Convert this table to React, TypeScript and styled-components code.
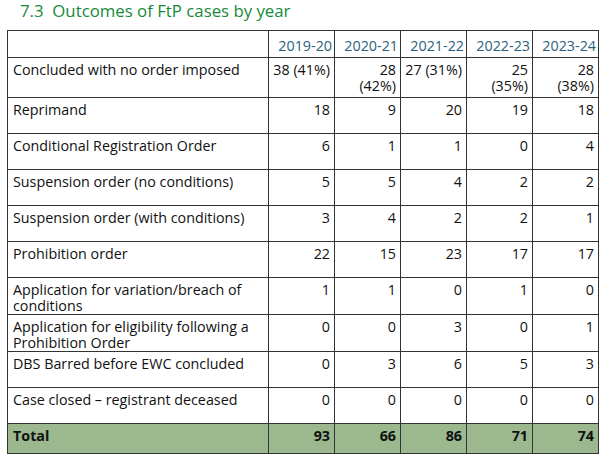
import styled, { createGlobalStyle } from 'styled-components';

const GlobalStyle = createGlobalStyle`
  body {
    margin: 0;
    background: #ffffff;
    font-family: 'Open Sans', 'Liberation Sans', sans-serif;
  }
`;

const Page = styled.div`
  padding: 0 0 0 7px;
  width: 606px;
  box-sizing: border-box;
`;

const Title = styled.h2`
  margin: 0;
  padding: 0 0 0 13px;
  height: 30px;
  line-height: 22px;
  font-size: 16.8px;
  font-weight: 400;
  color: #168a38;
`;

const Table = styled.table`
  border-collapse: collapse;
  table-layout: fixed;
  width: 591px;
  font-size: 14.3px;
  color: #111;
  border: 1.5px solid #333;
`;

const HeadCell = styled.th`
  border: 1px solid #333;
  height: 24px;
  padding: 2px 2px 0;
  font-weight: 400;
  color: #2c5f7e;
  text-align: right;
  vertical-align: middle;
  white-space: nowrap;
  font-size: 14.3px;
`;

const Row = styled.tr<{ $total?: boolean; $tall?: boolean }>`
  height: ${(p) => (p.$tall ? '40px' : p.$total ? '30px' : '36px')};
  background: ${(p) => (p.$total ? '#9bb88e' : 'transparent')};
  font-weight: ${(p) => (p.$total ? 700 : 400)};
`;

const LabelCell = styled.td`
  border: 1px solid #333;
  padding: 4px 5px 0;
  vertical-align: top;
  line-height: 16px;
`;

const NumCell = styled.td`
  border: 1px solid #333;
  padding: 4px 4px 0;
  vertical-align: top;
  text-align: right;
  line-height: 16px;
`;

const years = ['2019-20', '2020-21', '2021-22', '2022-23', '2023-24'];

const rows: { label: string; values: string[] }[] = [
  { label: 'Reprimand', values: ['18', '9', '20', '19', '18'] },
  { label: 'Conditional Registration Order', values: ['6', '1', '1', '0', '4'] },
  { label: 'Suspension order (no conditions)', values: ['5', '5', '4', '2', '2'] },
  { label: 'Suspension order (with conditions)', values: ['3', '4', '2', '2', '1'] },
  { label: 'Prohibition order', values: ['22', '15', '23', '17', '17'] },
  { label: 'Application for variation/breach of conditions', values: ['1', '1', '0', '1', '0'] },
  { label: 'Application for eligibility following a Prohibition Order', values: ['0', '0', '3', '0', '1'] },
  { label: 'DBS Barred before EWC concluded', values: ['0', '3', '6', '5', '3'] },
  { label: 'Case closed – registrant deceased', values: ['0', '0', '0', '0', '0'] },
];

const totals = ['93', '66', '86', '71', '74'];

const App = (): JSX.Element => {
  return (
    <>
      <GlobalStyle />
      <Page>
        <Title>7.3&nbsp;&nbsp;Outcomes of FtP cases by year</Title>
        <Table>
          <colgroup>
            <col style={{ width: 261 }} />
            {years.map((y) => (
              <col key={y} style={{ width: 66 }} />
            ))}
          </colgroup>
          <thead>
            <tr>
              <HeadCell />
              {years.map((y) => (
                <HeadCell key={y}>{y}</HeadCell>
              ))}
            </tr>
          </thead>
          <tbody>
            <Row $tall>
              <LabelCell>Concluded with no order imposed</LabelCell>
              <NumCell>38 (41%)</NumCell>
              <NumCell>28<br />(42%)</NumCell>
              <NumCell>27 (31%)</NumCell>
              <NumCell>25<br />(35%)</NumCell>
              <NumCell>28<br />(38%)</NumCell>
            </Row>
            {rows.map((r) => (
              <Row key={r.label}>
                <LabelCell>{r.label}</LabelCell>
                {r.values.map((v, i) => (
                  <NumCell key={i}>{v}</NumCell>
                ))}
              </Row>
            ))}
            <Row $total>
              <LabelCell>Total</LabelCell>
              {totals.map((v, i) => (
                <NumCell key={i}>{v}</NumCell>
              ))}
            </Row>
          </tbody>
        </Table>
      </Page>
    </>
  );
};

export default App;
